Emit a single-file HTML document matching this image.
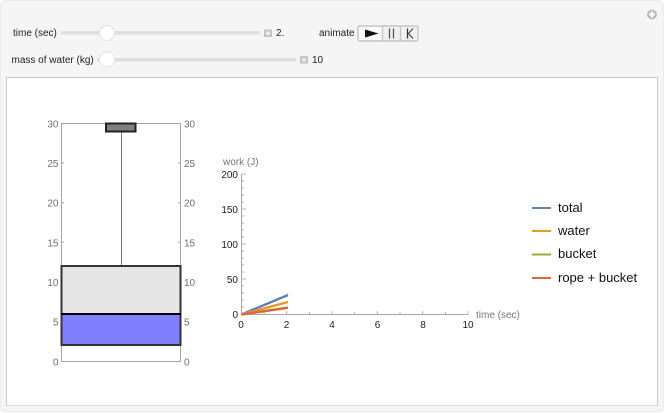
<!DOCTYPE html>
<html><head><meta charset="utf-8"><style>
html,body{margin:0;padding:0;background:#fff;width:664px;height:413px;overflow:hidden}
svg{display:block;font-family:"Liberation Sans",sans-serif}
.c{font-size:10px;fill:#222}
.g{font-size:10px;fill:#6e6e6e}
.k{font-size:10px;fill:#222}
.l{font-size:13px;fill:#111}
.a{font-size:10px;fill:#777}
</style></head><body>
<svg width="664" height="413" viewBox="0 0 664 413">
<rect x="0.5" y="0.5" width="663" height="411" rx="5" fill="#f5f5f5" stroke="#ececec"/>
<text class="c" x="13" y="36">time (sec)</text>
<rect x="61" y="31" width="199" height="3.500" rx="1.500" fill="#dedede"/>
<circle cx="107" cy="33" r="7.500" fill="#fff" stroke="#e2e2e2"/>
<rect x="264" y="29.500" width="8" height="7.500" fill="#c4c4c4"/><path d="M268 31v4.500M265.700 33.200h4.600" stroke="#fff" stroke-width="1.200"/>
<text class="c" x="276" y="36">2.</text>
<text class="c" x="11.500" y="63">mass of water (kg)</text>
<rect x="97" y="58" width="199" height="3.500" rx="1.500" fill="#dedede"/>
<circle cx="107" cy="59.500" r="7.500" fill="#fff" stroke="#e2e2e2"/>
<rect x="300" y="56" width="8" height="7.500" fill="#c4c4c4"/><path d="M304 57.500v4.500M301.700 59.700h4.600" stroke="#fff" stroke-width="1.200"/>
<text class="c" x="312" y="63">10</text>
<text class="c" x="319" y="36">animate</text>
<rect x="358" y="26" width="60" height="15" rx="1.500" fill="#f1f1f1" stroke="#c6c6c6" stroke-width="1.400"/>
<rect x="359" y="27" width="23" height="13" fill="#fbfbfb"/>
<path d="M382.500 26v15M400.500 26v15" stroke="#c6c6c6" stroke-width="1.400"/>
<path d="M365 29.500L378.500 33.500L365 37.500Z" fill="#111"/>
<path d="M389.500 28.500v10M393.500 28.500v10" stroke="#555" stroke-width="1.300"/>
<path d="M407.500 28.500v10" stroke="#333" stroke-width="1.300"/><path d="M413 28.500L408.500 33.500L413 38.500" fill="none" stroke="#333"/>
<circle cx="652" cy="14.500" r="5" fill="#bdbdbd"/><path d="M652 11.500v6M649 14.500h6" stroke="#fff" stroke-width="2"/>
<rect x="6.500" y="77.500" width="651" height="328" fill="#fff" stroke="#c9c9c9"/>
<path d="M7 405.500H657" stroke="#dcdcdc"/>

<rect x="61.500" y="123.500" width="119" height="238" fill="#fff" stroke="#a6a6a6"/>
<path d="M61 163h3M61 202.700h3M61 242.300h3M61 282h3M61 321.700h3M178 163h3M178 202.700h3M178 242.300h3M178 282h3M178 321.700h3" stroke="#a6a6a6"/>
<g class="g" text-anchor="end">
<text x="58.500" y="127.500">30</text><text x="58.500" y="167">25</text><text x="58.500" y="206.500">20</text><text x="58.500" y="246.500">15</text><text x="58.500" y="286">10</text><text x="58.500" y="325.500">5</text><text x="58.500" y="365.500">0</text></g>
<g class="g">
<text x="184" y="127.500">30</text><text x="184" y="167">25</text><text x="184" y="206.500">20</text><text x="184" y="246.500">15</text><text x="184" y="286">10</text><text x="184" y="325.500">5</text><text x="184" y="365.500">0</text></g>
<path d="M121.500 131V266" stroke="#777" stroke-width="1"/>
<rect x="106" y="123.500" width="29.500" height="8" fill="#808080" stroke="#222" stroke-width="2"/>
<rect x="62" y="266" width="118" height="48" fill="#e5e5e5"/>
<rect x="62" y="314" width="118" height="31" fill="#8080ff"/>
<rect x="61.500" y="266" width="119" height="79" fill="none" stroke="#333" stroke-width="2"/>
<path d="M61 314H181" stroke="#000" stroke-width="2"/>

<text class="a" x="223" y="165">work (J)</text>
<path d="M241.500 174V314.500H468" fill="none" stroke="#a6a6a6"/>
<path d="M242 174h4M242 209h4M242 244h4M242 279h4M242 181h2M242 188h2M242 195h2M242 202h2M242 216h2M242 223h2M242 230h2M242 237h2M242 251h2M242 258h2M242 265h2M242 272h2M242 286h2M242 293h2M242 300h2M242 307h2" stroke="#b4b4b4"/>
<path d="M286.700 311v3M332 311v3M377.300 311v3M422.700 311v3M468 311v3M264 312v2M309.400 312v2M354.700 312v2M400 312v2M445.400 312v2" stroke="#b4b4b4"/>
<g class="k" text-anchor="end"><text x="238" y="178">200</text><text x="238" y="213">150</text><text x="238" y="248">100</text><text x="238" y="283">50</text><text x="238" y="318">0</text></g>
<g class="k" text-anchor="middle"><text x="241" y="328">0</text><text x="286.500" y="328">2</text><text x="332" y="328">4</text><text x="377.500" y="328">6</text><text x="423" y="328">8</text><text x="468" y="328">10</text></g>
<text class="a" x="476" y="318">time (sec)</text>
<g fill="none" stroke-width="2.400">
<path d="M241.500 314.500L288 295" stroke="#5e81b5"/>
<path d="M241.500 314.500L288 302" stroke="#e19c24"/>
<path d="M241.500 314.500L288 307.700" stroke="#8fb032"/>
<path d="M241.500 314.500L288 307.700" stroke="#eb6235"/>
</g>
<g stroke-width="2">
<path d="M532 208h19" stroke="#5e81b5"/>
<path d="M532 231h19" stroke="#e19c24"/>
<path d="M532 254.500h19" stroke="#8fb032"/>
<path d="M532 278h19" stroke="#eb6235"/>
</g>
<text class="l" x="558" y="212">total</text>
<text class="l" x="558" y="235">water</text>
<text class="l" x="558" y="258">bucket</text>
<text class="l" x="558" y="282">rope + bucket</text>
</svg>
</body></html>
